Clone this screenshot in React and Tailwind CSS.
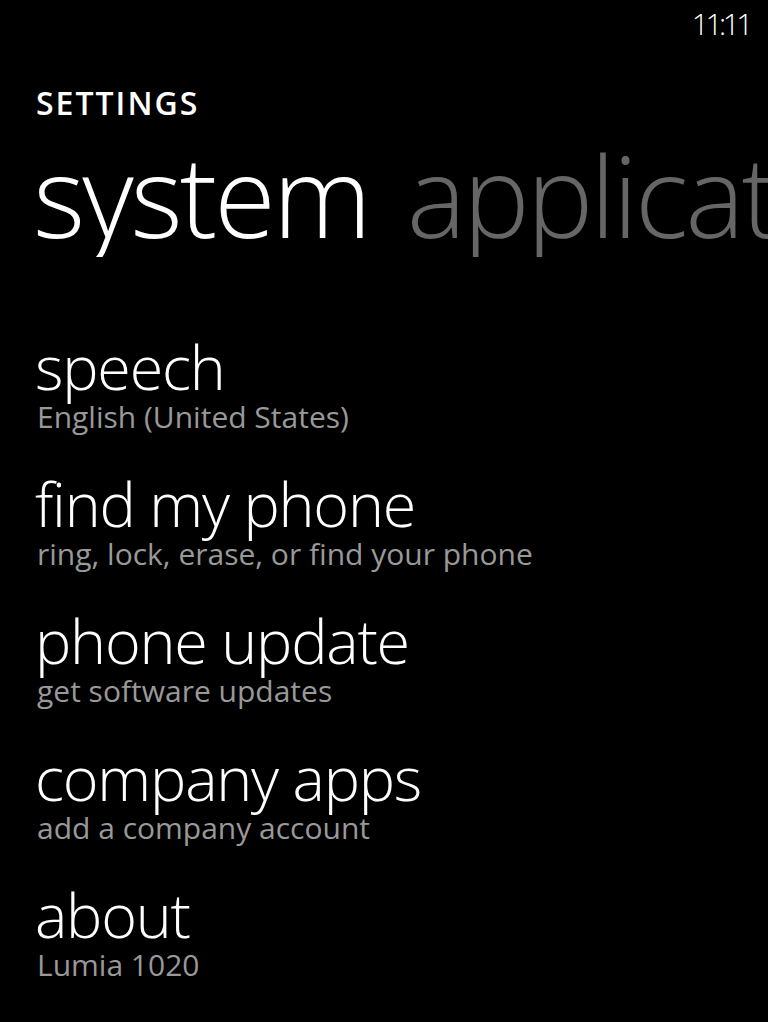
import React from 'react';

const items = [
  { title: 'speech', sub: 'English (United States)' },
  { title: 'find my phone', sub: 'ring, lock, erase, or find your phone' },
  { title: 'phone update', sub: 'get software updates' },
  { title: 'company apps', sub: 'add a company account' },
  { title: 'about', sub: 'Lumia 1020' },
];

export default function App() {
  return (
    <div className="w-[768px] h-[1022px] bg-black text-white overflow-hidden flex flex-col font-['Open_Sans','Noto_Sans',sans-serif]">
      {/* status bar */}
      <div className="h-[48px] flex justify-end items-start pr-[18px] pt-[4px]">
        <span className="text-[30px] font-light leading-[40px] tracking-[-3.5px]">11:11</span>
      </div>

      {/* title */}
      <div className="pl-[36px] mt-[33px]">
        <span className="text-[32px] font-semibold leading-[44px] tracking-[2px]">SETTINGS</span>
      </div>

      {/* pivot headers */}
      <div className="pl-[33px] mt-[8px] whitespace-nowrap overflow-hidden flex gap-[38px]">
        <span className="text-[112px] font-light leading-[124px] tracking-[-3px]">system</span>
        <span className="text-[112px] font-light leading-[124px] tracking-[-3px] text-[#666666]">applications</span>
      </div>

      {/* list */}
      <div className="pl-[35px] mt-[78px] flex flex-col gap-[37px]">
        {items.map((item) => (
          <div key={item.title} className="flex flex-col">
            <span className="text-[61px] font-light leading-[64px] tracking-[-1.2px]">{item.title}</span>
            <span className="text-[30px] leading-[36px] text-[#999999] pl-[2px]">{item.sub}</span>
          </div>
        ))}
      </div>
    </div>
  );
}
